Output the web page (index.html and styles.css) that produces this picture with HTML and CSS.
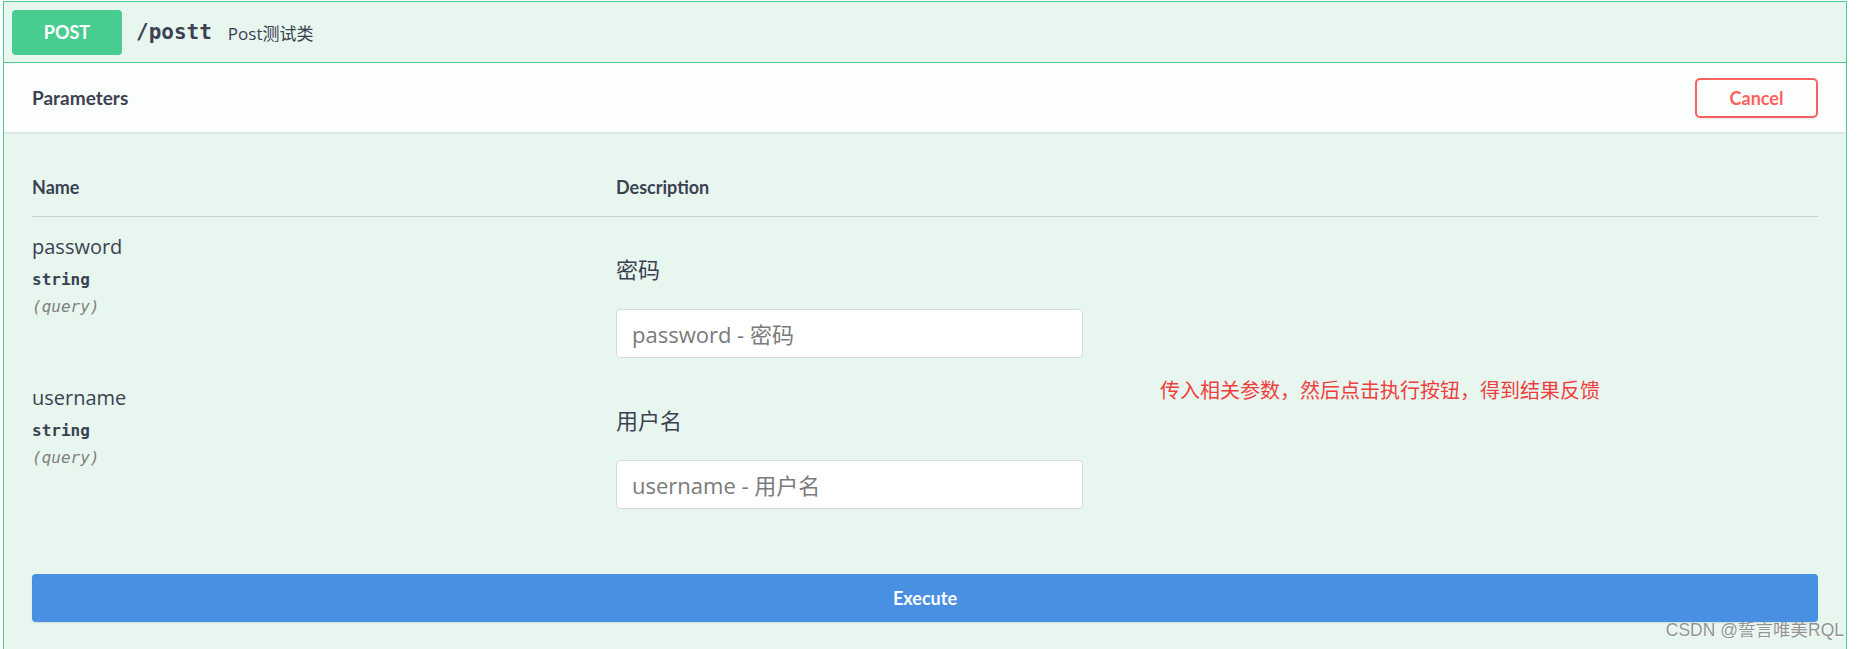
FILE: index.html
```html
<!DOCTYPE html>
<html lang="zh-CN">
<head>
    <meta charset="UTF-8">
    <title>postt - Swagger</title>
    <link rel="stylesheet" href="styles.css">
</head>
<body>
<div class="opblock">
    <div class="opblock-summary">
        <span class="method">POST</span>
        <span class="path">/postt</span>
        <span class="summary-desc">Post测试类</span>
    </div>

    <div class="section-header">
        <h4 class="section-title">Parameters</h4>
        <button class="btn btn-cancel">Cancel</button>
    </div>

    <div class="params">
        <div class="param-head">
            <div class="col-name">Name</div>
            <div class="col-desc">Description</div>
        </div>

        <div class="param-row">
            <div class="col-name">
                <div class="param-name">password</div>
                <div class="param-type">string</div>
                <div class="param-in">(query)</div>
            </div>
            <div class="col-desc">
                <p class="param-label">密码</p>
                <input class="param-input" type="text" placeholder="password - 密码">
            </div>
        </div>

        <div class="param-row">
            <div class="col-name">
                <div class="param-name">username</div>
                <div class="param-type">string</div>
                <div class="param-in">(query)</div>
            </div>
            <div class="col-desc">
                <p class="param-label">用户名</p>
                <input class="param-input" type="text" placeholder="username - 用户名">
            </div>
        </div>

        <div class="execute-wrap">
            <button class="btn btn-execute">Execute</button>
        </div>
    </div>
</div>

<p class="note">传入相关参数，然后点击执行按钮，得到结果反馈</p>
<div class="watermark">CSDN @誓言唯美RQL</div>
</body>
</html>
```

FILE: styles.css
```css
body {
    margin: 0;
    padding: 0;
    background: #fff;
    color: #3b4151;
    font-family: "Open Sans", "Noto Sans CJK SC", sans-serif;
    height: 649px;
    overflow: hidden;
}

.opblock {
    margin: 1px 0 0 3px;
    width: 1844px;
    height: 660px;
    box-sizing: border-box;
    border: 1px solid #49cc90;
    border-bottom: none;
    background: #e7f6ef;
}

/* summary bar */
.opblock-summary {
    display: flex;
    align-items: center;
    height: 60px;
    padding: 0 8px;
    border-bottom: 1px solid #49cc90;
}

.method {
    width: 110px;
    height: 45px;
    line-height: 45px;
    text-align: center;
    border-radius: 4px;
    background: #49cc90;
    color: #fff;
    font-family: Lato, "Noto Sans", sans-serif;
    font-weight: 700;
    font-size: 18px;
}

.path {
    margin-left: 14px;
    font-family: "DejaVu Sans Mono", monospace;
    font-weight: 700;
    font-size: 21px;
    color: #3b4151;
}

.summary-desc {
    margin-left: 16px;
    font-size: 17px;
    color: #3b4151;
}

/* parameters header */
.section-header {
    display: flex;
    align-items: center;
    justify-content: space-between;
    height: 69px;
    padding: 0 28px;
    background: rgba(255, 255, 255, 0.85);
    box-shadow: 0 1px 2px rgba(0, 0, 0, 0.1);
}

.section-title {
    margin: 0;
    font-family: Lato, "Noto Sans", sans-serif;
    font-weight: 700;
    font-size: 19px;
}

.btn {
    font-family: Lato, "Noto Sans", sans-serif;
    font-weight: 700;
    font-size: 18px;
    cursor: pointer;
    box-shadow: 0 1px 2px rgba(0, 0, 0, 0.1);
}

.btn-cancel {
    width: 123px;
    height: 40px;
    border: 2px solid #ff6060;
    border-radius: 5px;
    background: transparent;
    color: #ff6060;
}

/* parameter table */
.params {
    padding: 0 28px;
}

.param-head,
.param-row {
    display: grid;
    grid-template-columns: 584px 1fr;
}

.param-head {
    padding: 45px 0 19px;
    border-bottom: 1px solid rgba(59, 65, 81, 0.2);
    font-family: Lato, "Noto Sans", sans-serif;
    font-weight: 700;
    font-size: 18px;
    line-height: 20px;
}

.param-row {
    padding: 17px 0 10px;
}

.param-name {
    font-size: 20px;
    line-height: 26px;
}

.param-type {
    margin-top: 10px;
    font-family: "DejaVu Sans Mono", monospace;
    font-weight: 700;
    font-size: 16px;
    line-height: 20px;
}

.param-in {
    margin-top: 7px;
    font-family: "DejaVu Sans Mono", monospace;
    font-style: italic;
    font-size: 16px;
    line-height: 20px;
    color: #808080;
}

.param-label {
    margin: 20px 0 0;
    font-family: "Noto Sans CJK SC", sans-serif;
    font-size: 22px;
    line-height: 28px;
}

.param-input {
    display: block;
    margin-top: 27px;
    width: 467px;
    height: 49px;
    box-sizing: border-box;
    padding: 0 15px;
    border: 1px solid #d9d9d9;
    border-radius: 4px;
    background: #fff;
    font-family: "Open Sans", "Noto Sans CJK SC", sans-serif;
    font-size: 22px;
    color: #3b4151;
}

.param-input::placeholder {
    color: #7a7a7a;
}

.execute-wrap {
    padding-top: 55px;
}

.btn-execute {
    display: block;
    width: 100%;
    height: 48px;
    border: none;
    border-radius: 4px;
    background: #4990e2;
    color: #fff;
}

/* overlays */
.note {
    position: absolute;
    left: 1160px;
    top: 377px;
    margin: 0;
    font-family: "Noto Sans CJK SC", sans-serif;
    font-size: 20px;
    line-height: 26px;
    color: #f03e3e;
}

.watermark {
    position: absolute;
    right: 14px;
    top: 618px;
    white-space: nowrap;
    font-family: "Liberation Sans", "Noto Sans CJK SC", sans-serif;
    font-size: 17.5px;
    line-height: 24px;
    color: rgba(130, 130, 130, 0.85);
    text-shadow: 1px 1px 1px rgba(255, 255, 255, 0.8);
}
```
